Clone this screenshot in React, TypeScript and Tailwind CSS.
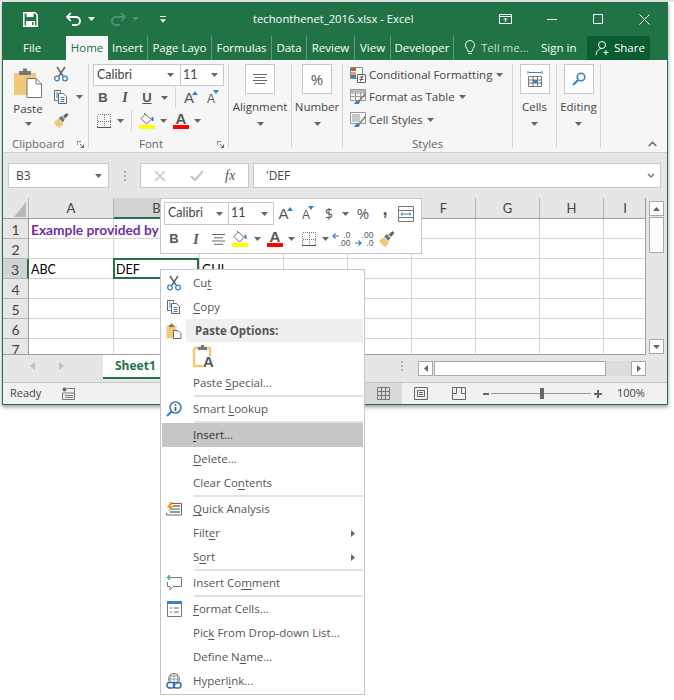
import type { ReactNode } from "react";

const UI = "font-['Open_Sans','Noto_Sans',sans-serif]";
const CELL = "font-['Lato','Liberation_Sans',sans-serif]";

const COLUMNS = [
  { name: "A", width: 85 },
  { name: "B", width: 86 },
  { name: "C", width: 84 },
  { name: "D", width: 64 },
  { name: "E", width: 64 },
  { name: "F", width: 64 },
  { name: "G", width: 64 },
  { name: "H", width: 64 },
  { name: "I", width: 42 },
];

const ROWS = [1, 2, 3, 4, 5, 6, 7];

const TABS = [
  { name: "Insert", width: 40 },
  { name: "Page Layo", width: 64 },
  { name: "Formulas", width: 60 },
  { name: "Data", width: 35 },
  { name: "Review", width: 48 },
  { name: "View", width: 36 },
  { name: "Developer", width: 63 },
];

function Caret({ color = "#666", size = 7 }: { color?: string; size?: number }) {
  return (
    <svg width={size} height={4} viewBox="0 0 7 4" className="shrink-0">
      <path d="M0 0h7L3.5 4z" fill={color} />
    </svg>
  );
}

function Scissors({ size = 16 }: { size?: number }) {
  return (
    <svg width={size} height={size} viewBox="0 0 16 16">
      <path d="M4 1l6 9M12 1l-6 9" stroke="#666" strokeWidth="1.6" fill="none" />
      <circle cx="4" cy="12.5" r="2.3" fill="none" stroke="#3f7fbf" strokeWidth="1.3" />
      <circle cx="12" cy="12.5" r="2.3" fill="none" stroke="#3f7fbf" strokeWidth="1.3" />
    </svg>
  );
}

function CopyIcon() {
  return (
    <svg width="16" height="16" viewBox="0 0 16 16">
      <path d="M1.5 1.5h6v2M1.5 1.5v10h3" fill="none" stroke="#666" />
      <path d="M5.5 4.5h5l3 3v7h-8z" fill="#fff" stroke="#666" />
      <path d="M7.5 8.5h4M7.5 10.5h4M7.5 12.5h4" stroke="#3f7fbf" />
      <path d="M3 4h2M3 6h2M3 8h2" stroke="#3f7fbf" />
    </svg>
  );
}

function Brush({ size = 18 }: { size?: number }) {
  return (
    <svg width={size} height={size} viewBox="0 0 18 18">
      <path d="M1 10.5l5-3.5 5 6-4 4-2.5-2.5-.5 1z" fill="#f0c878" />
      <path d="M6 6.5l3-2.5 3.5 4-2 3z" fill="#777" />
      <path d="M10.5 4.5l4-3.5 2 2-3.5 4z" fill="#666" />
    </svg>
  );
}

function PasteIcon() {
  return (
    <svg width="30" height="30" viewBox="0 0 30 30">
      <path d="M1 5h22v22H1z" fill="#f0c878" />
      <path d="M6 3h4V0.5h4V3h4v4H6z" fill="#777" />
      <path d="M14 10.5h9l5.5 5.5v13.5H14z" fill="#fff" stroke="#777" />
      <path d="M23 10.5v5.5h5.5" fill="none" stroke="#777" />
    </svg>
  );
}

function SmallPaste() {
  return (
    <svg width="16" height="16" viewBox="0 0 16 16">
      <path d="M0.5 2.5h10v13h-10z" fill="#f0c878" />
      <path d="M3 2h1.5V0.5h2V2H8v2H3z" fill="#777" />
      <path d="M7.5 7.5h4.5l3 3v5H7.5z" fill="#fff" stroke="#666" />
    </svg>
  );
}

function PasteText() {
  return (
    <svg width="22" height="24" viewBox="0 0 22 24" className="overflow-visible">
      <path d="M2 4h16v8M2 4v18h9" fill="none" stroke="#f0c878" strokeWidth="2.4" />
      <path d="M6 3h3V1h3v2h3v3H6z" fill="#777" />
      <text x="11" y="23" fontSize="15" fontWeight="700" fontFamily="Liberation Sans" fill="#555">
        A
      </text>
    </svg>
  );
}

function FillColor() {
  return (
    <div className="flex w-[16px] flex-col items-center">
      <svg width="16" height="12" viewBox="0 0 16 12">
        <path d="M6.5 1l5.5 5.5-4.500 4.500L2 5.500z" fill="#fff" stroke="#666" />
        <path d="M5 0l2 2" stroke="#666" />
        <path d="M12 5l2-1.500 1 4-2 .5z" fill="#3f7fbf" />
      </svg>
      <div className="h-[4px] w-[16px] bg-[#ffff00]" />
    </div>
  );
}

function FontColor() {
  return (
    <div className="flex w-[16px] flex-col items-center">
      <span className="h-[12px] font-['Liberation_Sans',sans-serif] text-[15px] leading-[12px] font-bold text-[#555]">A</span>
      <div className="h-[4px] w-[16px] bg-[#ff0000]" />
    </div>
  );
}

function ResizeFont({ up }: { up: boolean }) {
  return (
    <div className="flex items-start">
      <span className={`font-['Liberation_Sans',sans-serif] leading-[16px] text-[#555] ${up ? "text-[15px]" : "text-[12px] pt-[2px]"}`}>A</span>
      <svg width="6" height="4" viewBox="0 0 6 4" className="mt-[1px] -ml-[2px]">
        <path d={up ? "M0 4h6L3 0z" : "M0 0h6L3 4z"} fill="#3f7fbf" />
      </svg>
    </div>
  );
}

function Borders() {
  return (
    <svg width="14" height="14" viewBox="0 0 14 14" shapeRendering="crispEdges">
      <path d="M.5.5h13v13H.5zM7 .5v13M.5 7h13" fill="none" stroke="#777" strokeDasharray="1 1" />
      <path d="M0 13.500h14" stroke="#555" />
    </svg>
  );
}

function ConditionalIcon() {
  return (
    <svg width="16" height="16" viewBox="0 0 16 16">
      <path d="M.5.5h12v11H.5z" fill="#fff" stroke="#888" />
      <path d="M1 1h5v3H1z" fill="#c55a28" />
      <path d="M1 5h5v3H1z" fill="#e8a070" />
      <path d="M1 8h5v3H1z" fill="#3f7fbf" />
      <path d="M7.500 7.500h8v8h-8z" fill="#fff" stroke="#666" />
      <path d="M9.500 10h4M9.500 12.500h4M12.500 8.500l-2 6" stroke="#555" />
    </svg>
  );
}

function TableIcon() {
  return (
    <svg width="16" height="16" viewBox="0 0 16 16">
      <path d="M.5.5h15v11H.5zM5.500.5v11M10.500.5v11M.5 4h15M.5 7.500h15" fill="#f4f4f4" stroke="#999" />
      <path d="M1 1h14v3H1z" fill="#b8b8b8" />
      <path d="M4 15l2-3 3-1 1 1-1 3z" fill="#3f7fbf" />
      <path d="M9 11l6-7 1 1-6 7z" fill="#777" />
    </svg>
  );
}

function CellStyleIcon() {
  return (
    <svg width="16" height="16" viewBox="0 0 16 16">
      <path d="M.5.5h15v11H.5z" fill="#f4f4f4" stroke="#999" />
      <path d="M2 2h8v8H2z" fill="#c8c8c8" />
      <path d="M4 15l2-3 3-1 1 1-1 3z" fill="#3f7fbf" />
      <path d="M9 11l6-7 1 1-6 7z" fill="#777" />
    </svg>
  );
}

function Launcher() {
  return (
    <svg width="7" height="7" viewBox="0 0 7 7">
      <path d="M.5 4V.5H4" fill="none" stroke="#888" />
      <path d="M3 3l3.500 3.500M6.500 3.500v3h-3" fill="none" stroke="#666" />
    </svg>
  );
}

function BigBox({ label, children }: { label: string; children: ReactNode }) {
  return (
    <div className="flex h-[72px] flex-col items-center">
      <div className="flex h-[30px] w-[30px] items-center justify-center border border-[#c8c8c8] bg-white">{children}</div>
      <div className="mt-[4px] h-[18px] text-[11.5px] leading-[18px] text-[#444]">{label}</div>
      <div className="mt-[6px]">
        <Caret />
      </div>
    </div>
  );
}

function Group({
  width,
  label,
  labelPad,
  launcher,
  launcherPad = 4,
  children,
}: {
  width: number;
  label: string;
  labelPad: number;
  launcher?: boolean;
  launcherPad?: number;
  children: ReactNode;
}) {
  return (
    <div className="mt-[4px] h-[84px] shrink-0 border-r border-[#d4d4d4]" style={{ width }}>
      <div className="h-[72px]">{children}</div>
      <div className="flex h-[16px] items-center text-[11.5px] leading-[16px] text-[#666]" style={{ paddingLeft: labelPad, paddingRight: launcherPad }}>
        <span>{label}</span>
        {launcher && (
          <span className="ml-auto flex">
            <Launcher />
          </span>
        )}
      </div>
    </div>
  );
}

function Slot({ width, children }: { width: number; children?: ReactNode }) {
  return (
    <div className="flex h-full shrink-0 items-center justify-center" style={{ width }}>
      {children}
    </div>
  );
}

function Ribbon() {
  return (
    <div className={`flex h-[93px] border-b border-[#d0d0d0] bg-[#f6f6f6] ${UI}`}>
      <Group width={86} label="Clipboard" labelPad={9} launcher>
        <div className="flex">
          <div className="flex w-[50px] flex-col items-center">
            <div className="mt-[4px] h-[30px]">
              <PasteIcon />
            </div>
            <div className="mt-[2px] h-[18px] text-[11.5px] leading-[18px] text-[#444]">Paste</div>
            <div className="mt-[4px]">
              <Caret />
            </div>
          </div>
          <div className="flex flex-col">
            <div className="flex h-[20px] w-[16px] items-center justify-center">
              <Scissors />
            </div>
            <div className="flex h-[26px] items-center">
              <CopyIcon />
              <span className="ml-[7px]">
                <Caret />
              </span>
            </div>
            <div className="flex h-[20px] items-center">
              <Brush size={17} />
            </div>
          </div>
        </div>
      </Group>

      <Group width={140} label="Font" labelPad={50} launcher>
        <div className="flex h-[22px] pl-[4px]">
          <div className="flex w-[88px] items-center border border-[#c8c8c8] bg-white pr-[6px] pl-[3px]">
            <span className={`${CELL} text-[12.5px] text-[#444]`}>Calibri</span>
            <span className="ml-auto">
              <Caret />
            </span>
          </div>
          <div className="-ml-px flex w-[44px] items-center border border-[#c8c8c8] bg-white pr-[5px] pl-[2px]">
            <span className={`${CELL} text-[12.5px] text-[#444]`}>11</span>
            <span className="ml-auto">
              <Caret />
            </span>
          </div>
        </div>
        <div className="flex h-[23px] pl-[3px] text-[#555]">
          <Slot width={22}>
            <span className="font-['Liberation_Sans',sans-serif] text-[13px] font-bold">B</span>
          </Slot>
          <Slot width={22}>
            <span className="font-['Liberation_Serif',serif] text-[14px] font-bold italic">I</span>
          </Slot>
          <Slot width={22}>
            <span className="font-['Liberation_Sans',sans-serif] text-[13px] font-bold underline">U</span>
          </Slot>
          <Slot width={12}>
            <Caret />
          </Slot>
          <Slot width={10}>
            <div className="h-[21px] w-px bg-[#d4d4d4]" />
          </Slot>
          <Slot width={22}>
            <ResizeFont up />
          </Slot>
          <Slot width={22}>
            <ResizeFont up={false} />
          </Slot>
        </div>
        <div className="flex h-[23px] pl-[3px]">
          <Slot width={23}>
            <Borders />
          </Slot>
          <Slot width={10}>
            <Caret />
          </Slot>
          <Slot width={12}>
            <div className="h-[21px] w-px bg-[#d4d4d4]" />
          </Slot>
          <Slot width={20}>
            <FillColor />
          </Slot>
          <Slot width={12}>
            <Caret />
          </Slot>
          <Slot width={24}>
            <FontColor />
          </Slot>
          <Slot width={8}>
            <Caret />
          </Slot>
        </div>
      </Group>

      <Group width={63} label="" labelPad={0}>
        <BigBox label="Alignment">
          <svg width="14" height="10" viewBox="0 0 14 10">
            <path d="M0 .5h14M2 3.500h10M0 6.500h14M2 9.500h10" stroke="#666" />
          </svg>
        </BigBox>
      </Group>

      <Group width={51} label="" labelPad={0}>
        <BigBox label="Number">
          <span className="text-[15px] text-[#555]">%</span>
        </BigBox>
      </Group>

      <Group width={170} label="Styles" labelPad={69}>
        <div className="flex h-[21px] items-center gap-[3px] pl-[7px] text-[11.5px] text-[#444]">
          <ConditionalIcon />
          <span className="mr-[1px]">Conditional Formatting</span>
          <Caret />
        </div>
        <div className="flex h-[23px] items-center gap-[3px] pl-[7px] text-[11.5px] text-[#444]">
          <TableIcon />
          <span className="mr-[1px]">Format as Table</span>
          <Caret />
        </div>
        <div className="flex h-[23px] items-center gap-[3px] pl-[7px] text-[11.5px] text-[#444]">
          <CellStyleIcon />
          <span className="mr-[1px]">Cell Styles</span>
          <Caret />
        </div>
      </Group>

      <Group width={44} label="" labelPad={0}>
        <BigBox label="Cells">
          <svg width="16" height="18" viewBox="0 0 16 18">
            <path d="M1 1v3M15 1v3M2 2.500h12" stroke="#3f7fbf" />
            <path d="M1.500 6.500h13v10h-13zM1.500 10h13M1.500 13h13M6 6.500v10M10.500 6.500v10" fill="#fff" stroke="#777" />
            <path d="M6 10h5v3H6z" fill="#3f7fbf" />
          </svg>
        </BigBox>
      </Group>

      <Group width={44} label="" labelPad={0}>
        <BigBox label="Editing">
          <svg width="14" height="14" viewBox="0 0 14 14">
            <circle cx="9" cy="5" r="3.800" fill="none" stroke="#3f7fbf" strokeWidth="1.600" />
            <path d="M6 8l-5 5" stroke="#3f7fbf" strokeWidth="2.200" />
          </svg>
        </BigBox>
      </Group>

      <div className="flex flex-1 items-end justify-end pr-[10px] pb-[5px]">
        <svg width="9" height="6" viewBox="0 0 9 6">
          <path d="M.7 5l3.800-3.800L8.300 5" fill="none" stroke="#666" strokeWidth="1.500" />
        </svg>
      </div>
    </div>
  );
}

function TitleBar() {
  return (
    <div className={`flex h-[34px] items-center bg-[#217346] text-white ${UI}`}>
      <div className="ml-[20px] flex w-[15px]">
        <svg width="15" height="15" viewBox="0 0 15 15">
          <path d="M.8.8h11.200l2.200 2.200v11.200H.8z" fill="none" stroke="#fff" strokeWidth="1.600" />
          <path d="M3.500 1h7v4h-7zM3 9h9v5H3z" fill="#fff" />
          <path d="M9 10h1.500v3H9z" fill="#217346" />
        </svg>
      </div>
      <div className="ml-[28px] w-[15px]">
        <svg width="16" height="14" viewBox="0 0 16 14">
          <path d="M1 5h9a4 4 0 0 1 0 8H6M4.800 1L1 5l3.800 4" fill="none" stroke="#fff" strokeWidth="1.800" />
        </svg>
      </div>
      <div className="ml-[7px]">
        <Caret color="#fff" />
      </div>
      <div className="ml-[15px] w-[15px]">
        <svg width="16" height="14" viewBox="0 0 16 14">
          <path d="M15 5H6a4 4 0 0 0 0 8h4M11.200 1L15 5l-3.800 4" fill="none" stroke="#4c9270" strokeWidth="1.800" />
        </svg>
      </div>
      <div className="ml-[7px]">
        <Caret color="#4c9270" />
      </div>
      <div className="ml-[21px] flex flex-col items-center gap-[2px]">
        <div className="h-px w-[6px] bg-white" />
        <Caret color="#fff" size={6} />
      </div>
      <div className="ml-[87px] w-[160px] text-center text-[11.25px] whitespace-nowrap text-white">techonthenet_2016.xlsx - Excel</div>
      <div className="ml-[86px]">
        <svg width="14" height="11" viewBox="0 0 14 11">
          <path d="M.5 .5h12v9H.5zM.5 2.500h12M6.500 8V4M4.500 6l2-2 2 2" fill="none" stroke="#fff" />
        </svg>
      </div>
      <div className="ml-[34px]">
        <div className="h-px w-[10px] bg-white" />
      </div>
      <div className="ml-[36px] h-[10px] w-[10px] border border-white" />
      <div className="ml-[36px]">
        <svg width="11" height="11" viewBox="0 0 11 11">
          <path d="M.5.5l10 10M10.500.5l-10 10" stroke="#fff" />
        </svg>
      </div>
    </div>
  );
}

function TabBar() {
  return (
    <div className={`flex h-[24px] bg-[#217346] text-[11.5px] leading-[24px] text-white ${UI}`}>
      <div className="w-[63px] pl-[20px]">File</div>
      <div className="w-[42px] bg-[#f6f6f6] text-center text-[#217346]">Home</div>
      {TABS.map((t) => (
        <div key={t.name} className="shrink-0 border-r border-[#5b9a7a] text-center" style={{ width: t.width }}>
          {t.name}
        </div>
      ))}
      <div className="flex w-[87px] items-center pl-[10px] text-[#c8dcd0]">
        <svg width="12" height="16" viewBox="0 0 12 16" className="mr-[5px]">
          <path d="M4 11.500C4 9 1.500 8 1.500 5a4.500 4.500 0 0 1 9 0C10.500 8 8 9 8 11.500zM4 13.500h4" fill="none" stroke="#fff" />
        </svg>
        Tell me...
      </div>
      <div className="w-[46px]">Sign in</div>
      <div className="flex w-[63px] items-center bg-[#0b5c30] pl-[8px]">
        <svg width="16" height="16" viewBox="0 0 16 16" className="mr-[3px]">
          <circle cx="7" cy="5" r="3.500" fill="none" stroke="#fff" />
          <path d="M1 15c0-4 3-6 5-6.500M11 10v5M8.500 12.500h5" fill="none" stroke="#fff" />
        </svg>
        Share
      </div>
    </div>
  );
}

function FormulaBar() {
  return (
    <div className={`flex h-[45px] bg-[#e6e6e6] pt-[10px] ${UI}`}>
      <div className="ml-[5px] flex h-[25px] w-[101px] items-center border border-[#c8c8c8] bg-white pr-[6px] pl-[7px] text-[12px] text-[#444]">
        B3
        <span className="ml-auto">
          <Caret />
        </span>
      </div>
      <div className="flex h-[25px] w-[31px] flex-col items-center justify-center gap-[2px]">
        <div className="h-[2px] w-[2px] bg-[#b0b0b0]" />
        <div className="h-[2px] w-[2px] bg-[#b0b0b0]" />
        <div className="h-[2px] w-[2px] bg-[#b0b0b0]" />
      </div>
      <div className="flex h-[25px] w-[109px] items-center border border-[#c8c8c8] bg-white">
        <svg width="12" height="12" viewBox="0 0 12 12" className="ml-[13px]">
          <path d="M1 1l10 10M11 1L1 11" stroke="#c4c4c4" strokeWidth="1.500" />
        </svg>
        <svg width="14" height="12" viewBox="0 0 14 12" className="ml-[24px]">
          <path d="M1 6l4 4 8-9" fill="none" stroke="#c4c4c4" strokeWidth="2" />
        </svg>
        <span className="ml-[21px] font-['Liberation_Serif',serif] text-[14px] text-[#555] italic">fx</span>
      </div>
      <div className="ml-[4px] flex h-[25px] w-[408px] items-center border border-[#c8c8c8] bg-white pr-[5px] pl-[12px] text-[12px] text-[#444]">
        'DEF
        <svg width="8" height="6" viewBox="0 0 8 6" className="ml-auto">
          <path d="M1 1l3 3 3-3" fill="none" stroke="#777" strokeWidth="1.500" />
        </svg>
      </div>
    </div>
  );
}

function Grid() {
  return (
    <div className={`h-[157px] w-[643px] shrink-0 overflow-hidden border-r border-b border-[#9e9e9e] bg-white ${CELL}`}>
      <div className="flex h-[21px] border-b border-[#9e9e9e] bg-[#e6e6e6] text-[13px] leading-[20px] text-[#444]">
        <div className="flex w-[26px] shrink-0 items-end justify-end border-r border-[#b4b4b4] pr-[2px] pb-[1px]">
          <svg width="12" height="15" viewBox="0 0 12 15">
            <path d="M12 0v15H0z" fill="#b8b8b8" />
          </svg>
        </div>
        {COLUMNS.map((c) => (
          <div
            key={c.name}
            className={
              c.name === "B"
                ? "-mb-px shrink-0 border-r border-b-2 border-r-[#b4b4b4] border-b-[#217346] bg-[#d2d2d2] text-center"
                : "shrink-0 border-r border-[#b4b4b4] text-center last:border-r-0"
            }
            style={{ width: c.width }}
          >
            {c.name}
          </div>
        ))}
      </div>
      {ROWS.map((row) => (
        <div key={row} className="flex h-[20px]">
          <div
            className={
              row === 3
                ? "w-[26px] shrink-0 border-r-2 border-b border-r-[#217346] border-b-[#b4b4b4] bg-[#d2d2d2] text-center text-[14px] leading-[21px] text-[#444]"
                : "w-[26px] shrink-0 border-r border-b border-r-[#9e9e9e] border-b-[#b4b4b4] bg-[#e6e6e6] text-center text-[14px] leading-[21px] text-[#444]"
            }
          >
            {row}
          </div>
          {COLUMNS.map((c) => (
            <div
              key={c.name}
              className="relative shrink-0 border-r border-b border-[#d4d4d4] pl-[2px] text-[12.5px] leading-[21px] whitespace-nowrap text-black last:border-r-0"
              style={{ width: c.width }}
            >
              {row === 1 && c.name === "A" && <span className="text-[13.75px] font-bold text-[#7030a0]">Example provided by techonthenet.com</span>}
              {row === 3 && c.name === "A" && "ABC"}
              {row === 3 && c.name === "B" && (
                <>
                  DEF
                  <div className="absolute -top-px -left-px h-[21px] w-[86px] border-2 border-[#217346]" />
                </>
              )}
              {row === 3 && c.name === "C" && "GHI"}
            </div>
          ))}
        </div>
      ))}
    </div>
  );
}

function VScroll() {
  return (
    <div className="mt-[3px] ml-[3px] flex h-[153px] w-[15px] flex-col">
      <div className="flex h-[15px] items-center justify-center border border-[#a8a8a8] bg-white">
        <svg width="7" height="4" viewBox="0 0 7 4">
          <path d="M0 4h7L3.500 0z" fill="#666" />
        </svg>
      </div>
      <div className="mt-px h-[36px] border border-[#a8a8a8] bg-white" />
      <div className="flex-1" />
      <div className="flex h-[15px] items-center justify-center border border-[#a8a8a8] bg-white">
        <Caret />
      </div>
    </div>
  );
}

function SheetRow() {
  return (
    <div className={`flex h-[27px] bg-[#e6e6e6] ${UI}`}>
      <div className="flex h-[22px] w-[100px] items-center pl-[27px]">
        <svg width="5" height="8" viewBox="0 0 5 8">
          <path d="M5 0v8L0 4z" fill="#c0c0c0" />
        </svg>
        <svg width="5" height="8" viewBox="0 0 5 8" className="ml-[24px]">
          <path d="M0 0v8l5-4z" fill="#c0c0c0" />
        </svg>
      </div>
      <div className="h-[24px] w-[70px] border-b-2 border-[#217346] bg-white pl-[12px] text-[12px] leading-[22px] font-bold text-[#217346]">Sheet1</div>
      <div className="ml-[228px] flex h-[22px] flex-col items-center justify-center gap-[2px]">
        <div className="h-[2px] w-[2px] bg-[#b0b0b0]" />
        <div className="h-[2px] w-[2px] bg-[#b0b0b0]" />
        <div className="h-[2px] w-[2px] bg-[#b0b0b0]" />
      </div>
      <div className="mt-[6px] ml-[15px] flex h-[15px] w-[228px]">
        <div className="flex w-[15px] items-center justify-center border border-[#a8a8a8] bg-white">
          <svg width="4" height="7" viewBox="0 0 4 7">
            <path d="M4 0v7L0 3.500z" fill="#666" />
          </svg>
        </div>
        <div className="ml-px w-[172px] border border-[#a8a8a8] bg-white" />
        <div className="w-[25px] bg-[#dcdcdc]" />
        <div className="flex w-[15px] items-center justify-center border border-[#a8a8a8] bg-white">
          <svg width="4" height="7" viewBox="0 0 4 7">
            <path d="M0 0v7l4-3.500z" fill="#666" />
          </svg>
        </div>
      </div>
    </div>
  );
}

function StatusBar() {
  return (
    <div className={`flex h-[22px] items-center border-t border-[#c6c6c6] bg-[#f1f1f1] text-[11px] text-[#444] ${UI}`}>
      <span className="ml-[7px] w-[52px]">Ready</span>
      <svg width="13" height="13" viewBox="0 0 13 13">
        <circle cx="2.500" cy="2.500" r="2" fill="#666" />
        <path d="M5 1.500h7.500v11H.5V6h12M3 8.500h8M3 10.500h8" fill="none" stroke="#777" />
      </svg>
      <div className="ml-[290px] flex h-full w-[37px] items-center justify-center bg-[#d9d9d9]">
        <svg width="13" height="13" viewBox="0 0 13 13">
          <path d="M.5.5h12v12H.5zM4.500.5v12M8.500.5v12M.5 4.500h12M.5 8.500h12" fill="none" stroke="#777" />
        </svg>
      </div>
      <svg width="14" height="13" viewBox="0 0 14 13" className="ml-[12px]">
        <path d="M.5.5h13v12H.5zM3.500 3.500h7v6h-7zM5 5.500h4M5 7.500h4" fill="none" stroke="#666" />
      </svg>
      <svg width="14" height="13" viewBox="0 0 14 13" className="ml-[24px]">
        <path d="M.5.5h13v12H.5zM.5 6.500h4v-6M9.500.5v6h4" fill="none" stroke="#666" />
      </svg>
      <div className="ml-[17px] h-[2px] w-[6px] bg-[#666]" />
      <div className="ml-[2px] flex w-[100px] items-center">
        <div className="h-px w-[49px] bg-[#999]" />
        <div className="h-[11px] w-[4px] bg-[#666]" />
        <div className="h-px w-[47px] bg-[#999]" />
      </div>
      <svg width="8" height="8" viewBox="0 0 8 8" className="ml-[3px]">
        <path d="M4 0v8M0 4h8" stroke="#666" strokeWidth="2" />
      </svg>
      <span className="ml-[15px]">100%</span>
    </div>
  );
}

function DecimalIcon({ more }: { more?: boolean }) {
  return (
    <div className="flex items-center text-[#555]">
      <svg width="7" height="14" viewBox="0 0 7 14" className={more ? "" : "mt-[6px]"}>
        <path d={more ? "M7 4H1M3.500 1.500L1 4l2.500 2.500" : "M0 8h6M3.500 5.500L6 8l-2.500 2.500"} fill="none" stroke="#3f7fbf" strokeWidth="1.200" />
      </svg>
      <div className="flex flex-col items-end font-['Liberation_Sans',sans-serif] text-[8.500px] leading-[8px]">
        <span>{more ? ".0" : ".00"}</span>
        <span>{more ? ".00" : ".0"}</span>
      </div>
    </div>
  );
}

function MiniToolbar() {
  return (
    <div className={`absolute top-[198px] left-[160px] h-[56px] w-[262px] border border-[#c6c6c6] bg-white ${UI}`}>
      <div className="flex h-[26px] pt-[3px] pl-[3px]">
        <div className="flex h-[23px] w-[65px] items-center border border-[#c8c8c8] pr-[5px] pl-[3px]">
          <span className={`${CELL} text-[12.5px] text-[#444]`}>Calibri</span>
          <span className="ml-auto">
            <Caret />
          </span>
        </div>
        <div className="-ml-px flex h-[23px] w-[46px] items-center border border-[#c8c8c8] pr-[5px] pl-[2px]">
          <span className={`${CELL} text-[12.5px] text-[#444]`}>11</span>
          <span className="ml-auto">
            <Caret />
          </span>
        </div>
        <Slot width={23}>
          <ResizeFont up />
        </Slot>
        <Slot width={22}>
          <ResizeFont up={false} />
        </Slot>
        <Slot width={20}>
          <span className="text-[14px] text-[#555]">$</span>
        </Slot>
        <Slot width={12}>
          <Caret />
        </Slot>
        <Slot width={24}>
          <span className="text-[15px] text-[#555]">%</span>
        </Slot>
        <Slot width={20}>
          <span className="-mt-[10px] font-['Liberation_Sans',sans-serif] text-[18px] leading-none font-bold text-[#555]">,</span>
        </Slot>
        <Slot width={22}>
          <svg width="16" height="16" viewBox="0 0 16 16">
            <path d="M.5 .5h15v15H.5zM.5 4.500h15M.5 11.500h15" fill="none" stroke="#777" />
            <path d="M3 8h10M4.500 6.500L3 8l1.500 1.500M11.500 6.500L13 8l-1.500 1.500" fill="none" stroke="#3f7fbf" />
          </svg>
        </Slot>
      </div>
      <div className="flex h-[28px] pl-[2px] text-[#555]">
        <Slot width={22}>
          <span className="font-['Liberation_Sans',sans-serif] text-[13px] font-bold">B</span>
        </Slot>
        <Slot width={22}>
          <span className="font-['Liberation_Serif',serif] text-[14px] font-bold italic">I</span>
        </Slot>
        <Slot width={22}>
          <svg width="13" height="11" viewBox="0 0 13 11">
            <path d="M0 .5h13M2 3.800h9M0 7h13M2 10.300h9" stroke="#666" />
          </svg>
        </Slot>
        <Slot width={22}>
          <FillColor />
        </Slot>
        <Slot width={12}>
          <Caret />
        </Slot>
        <Slot width={24}>
          <FontColor />
        </Slot>
        <Slot width={8}>
          <Caret />
        </Slot>
        <Slot width={27}>
          <Borders />
        </Slot>
        <Slot width={6}>
          <Caret />
        </Slot>
        <Slot width={26}>
          <DecimalIcon more />
        </Slot>
        <Slot width={20}>
          <DecimalIcon />
        </Slot>
        <Slot width={26}>
          <Brush size={18} />
        </Slot>
      </div>
    </div>
  );
}

function Item({
  icon,
  before,
  hot,
  after,
  active,
  submenu,
}: {
  icon?: ReactNode;
  before: string;
  hot: string;
  after: string;
  active?: boolean;
  submenu?: boolean;
}) {
  return (
    <div className={active ? "flex h-[24px] items-center bg-[#c6c6c6] text-[#333]" : "flex h-[24px] items-center"}>
      <div className="flex w-[24px] justify-center">{icon}</div>
      <div className="ml-[7px] whitespace-nowrap">
        {before}
        <span className="underline underline-offset-2">{hot}</span>
        {after}
      </div>
      {submenu && (
        <svg width="4" height="7" viewBox="0 0 4 7" className="mr-[8px] ml-auto">
          <path d="M0 0v7l4-3.500z" fill="#666" />
        </svg>
      )}
    </div>
  );
}

function Sep() {
  return <div className="ml-[32px] h-[2px] bg-[#e2e2e2]" />;
}

function ContextMenu() {
  return (
    <div className={`absolute top-[269px] left-[160px] h-[426px] w-[205px] border border-[#c6c6c6] bg-white pt-[1px] pr-[1px] pl-[1px] text-[11.5px] text-[#555] ${UI}`}>
      <Item icon={<Scissors />} before="Cu" hot="t" after="" />
      <Item icon={<CopyIcon />} before="" hot="C" after="opy" />
      <div className="flex h-[23px] items-center">
        <div className="flex w-[24px] justify-center">
          <SmallPaste />
        </div>
        <div className="h-full flex-1 bg-[#efefef] pl-[9px] leading-[23px] font-bold text-[#555]">Paste Options:</div>
      </div>
      <div className="h-[29px] pt-[2px] pl-[30px]">
        <PasteText />
      </div>
      <Item before="Paste " hot="S" after="pecial..." />
      <Sep />
      <Item
        icon={
          <svg width="16" height="16" viewBox="0 0 16 16">
            <circle cx="9.500" cy="6.500" r="5.500" fill="none" stroke="#3f7fbf" strokeWidth="1.600" />
            <path d="M5.500 10.500L1 15" stroke="#3f7fbf" strokeWidth="2.200" />
            <path d="M9.500 6v4" stroke="#555" strokeWidth="1.600" />
            <path d="M9.500 3v1.600" stroke="#555" strokeWidth="1.600" />
          </svg>
        }
        before="Smart "
        hot="L"
        after="ookup"
      />
      <Sep />
      <Item before="" hot="I" after="nsert..." active />
      <Item before="" hot="D" after="elete..." />
      <Item before="Clear Co" hot="n" after="tents" />
      <Sep />
      <Item
        icon={
          <svg width="16" height="14" viewBox="0 0 16 14">
            <path d="M4 0L1 6h3l-2 4 6-6H5l2-4z" fill="#f0a030" />
            <path d="M6 1.500h9.500v11.500H.5V11" fill="none" stroke="#666" />
            <path d="M7 4h7" stroke="#c55a28" strokeWidth="1.500" />
            <path d="M4 7h10" stroke="#70a860" strokeWidth="1.500" />
            <path d="M4 10h10" stroke="#3f7fbf" strokeWidth="1.500" />
          </svg>
        }
        before=""
        hot="Q"
        after="uick Analysis"
      />
      <Item before="Filt" hot="e" after="r" submenu />
      <Item before="S" hot="o" after="rt" submenu />
      <Sep />
      <Item
        icon={
          <svg width="16" height="16" viewBox="0 0 16 16">
            <path d="M5 2.500h10.500v9H7L4 15v-3.500H1.500V7" fill="none" stroke="#777" />
            <path d="M3 0v5M.5 2.500h5" stroke="#5ca572" strokeWidth="1.500" />
          </svg>
        }
        before="Insert Co"
        hot="m"
        after="ment"
      />
      <Sep />
      <Item
        icon={
          <svg width="15" height="16" viewBox="0 0 15 16">
            <path d="M.5 .5h14v15H.5z" fill="#fff" stroke="#777" />
            <path d="M0 0h15v3H0z" fill="#3f7fbf" />
            <path d="M3 7h2M3 11h2M7 7h5M7 11h5" stroke="#666" />
          </svg>
        }
        before=""
        hot="F"
        after="ormat Cells..."
      />
      <Item before="Pic" hot="k" after=" From Drop-down List..." />
      <Item before="Define N" hot="a" after="me..." />
      <Item
        icon={
          <svg width="16" height="16" viewBox="0 0 16 16">
            <circle cx="8" cy="6" r="5.500" fill="none" stroke="#777" />
            <path d="M2.500 6h11M8 .5v11M4.500 3h7M5 .9C4 5 4 7 5 11M11 .9c1 4 1 6 0 10" fill="none" stroke="#777" strokeWidth=".7" />
            <rect x="1" y="9.500" width="7.500" height="5.500" rx="2.700" fill="#fff" stroke="#2f6fb0" strokeWidth="1.500" />
            <rect x="7.500" y="9.500" width="7.500" height="5.500" rx="2.700" fill="none" stroke="#2f6fb0" strokeWidth="1.500" />
          </svg>
        }
        before="Hyperl"
        hot="i"
        after="nk..."
      />
    </div>
  );
}

export default function App() {
  return (
    <div className="relative h-[700px] w-[674px] overflow-hidden bg-white">
      <div className="h-[2px] bg-[#e4e4e4]" />
      <div className="ml-[2px] w-[666px] border-x border-b border-[#217346] bg-[#e6e6e6] shadow-[0_2px_4px_rgba(0,0,0,0.4)]">
        <TitleBar />
        <TabBar />
        <Ribbon />
        <FormulaBar />
        <div className="flex h-[157px]">
          <Grid />
          <VScroll />
        </div>
        <SheetRow />
        <StatusBar />
      </div>
      <MiniToolbar />
      <ContextMenu />
    </div>
  );
}
